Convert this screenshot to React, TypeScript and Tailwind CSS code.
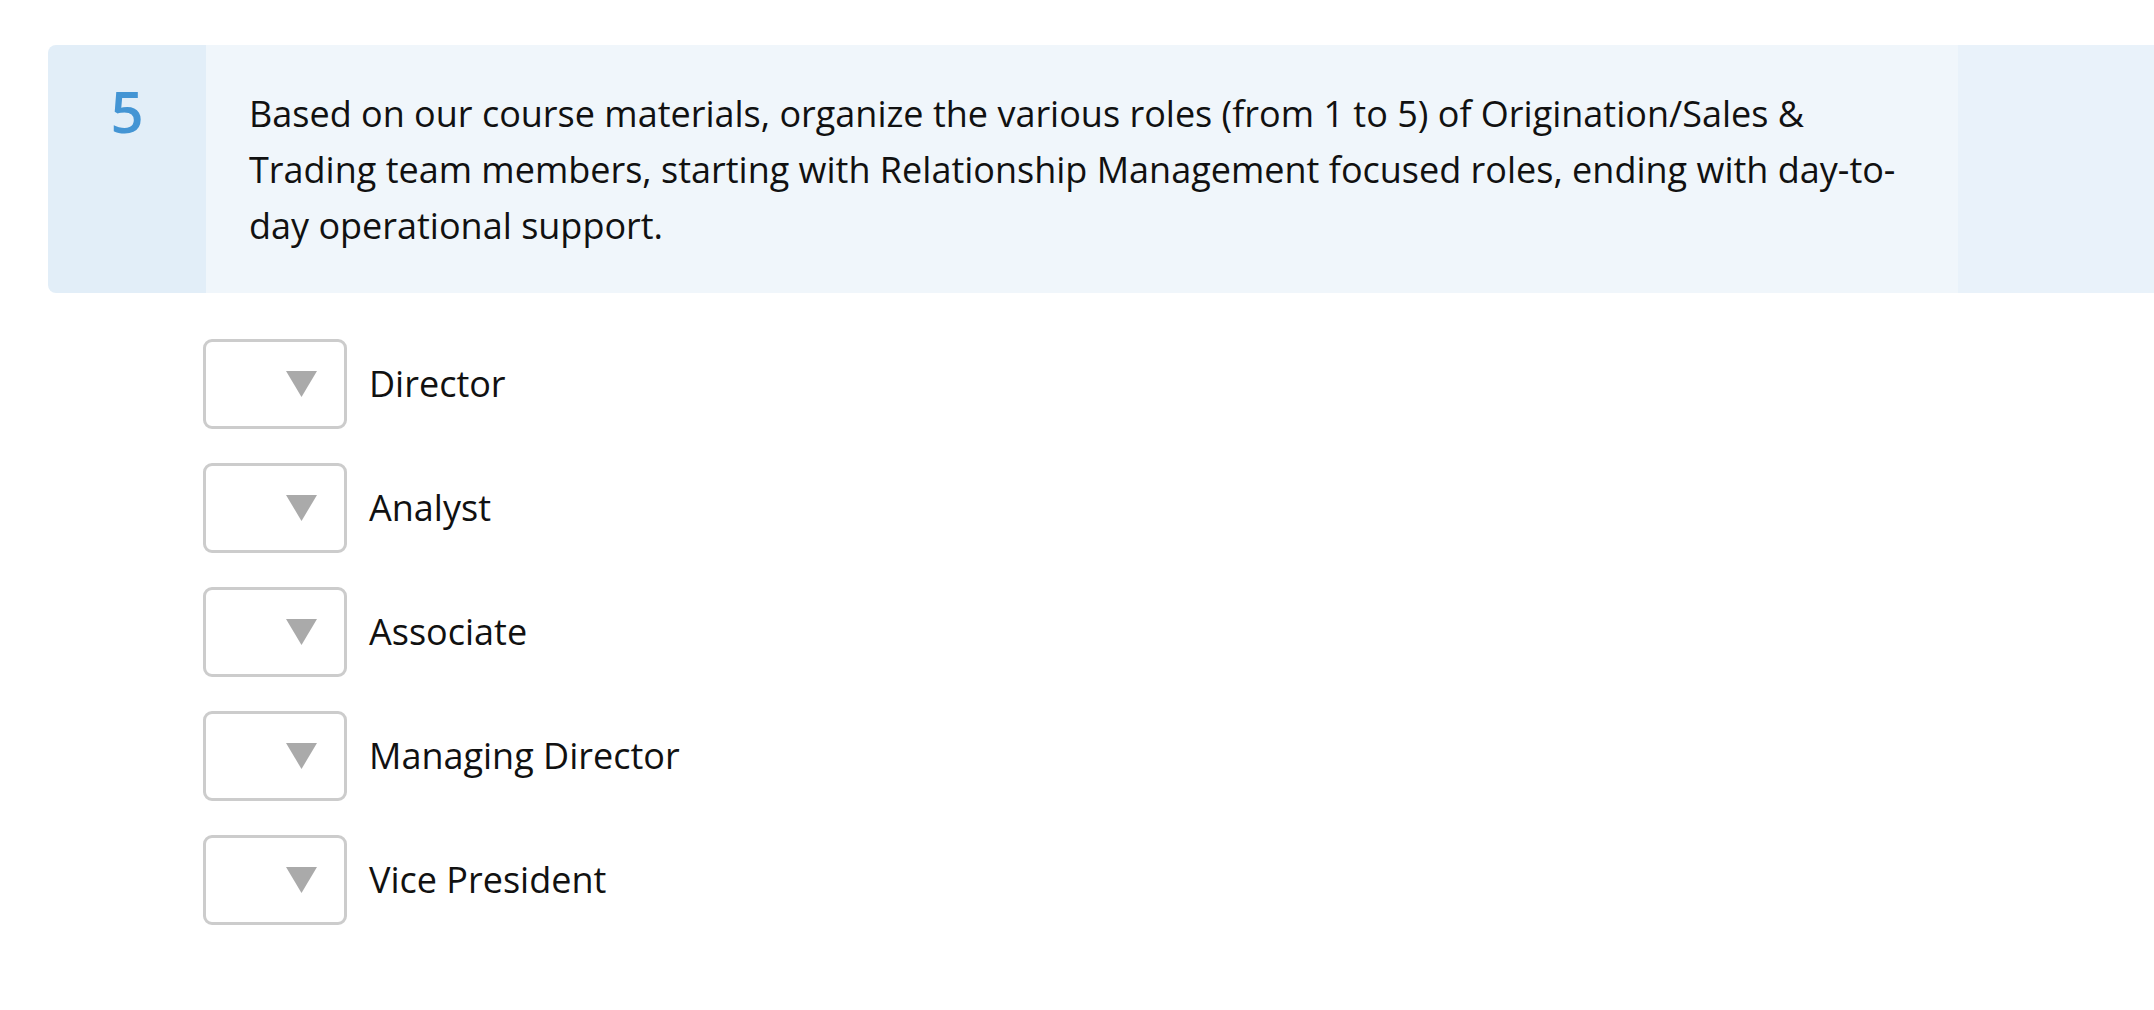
const roles = ["Director", "Analyst", "Associate", "Managing Director", "Vice President"];

function RankSelect() {
  return (
    <div className="relative flex h-[90px] w-[144px] shrink-0 items-center justify-end rounded-[9px] border-[3px] border-[#cccccc] bg-white pr-[27px]">
      <svg viewBox="0 0 31 26" className="h-[26px] w-[31px] fill-[#aaaaaa]">
        <polygon points="0 0 31 0 15.5 26" />
      </svg>
    </div>
  );
}

export default function App() {
  return (
    <div className="min-h-screen w-full overflow-x-hidden bg-white font-['Open_Sans',sans-serif] text-[#111111]">
      <div className="pl-[48px] pt-[45px]">
        {/* question header */}
        <div className="flex w-[2250px] overflow-hidden rounded-l-[8px]">
          <div className="flex w-[158px] shrink-0 justify-center bg-[#e2eef8] pt-[26px]">
            <div className="text-[58px] font-semibold leading-[80px] text-[#4495d4]">5</div>
          </div>
          <div className="w-[1752px] shrink-0 bg-[#f0f6fb] pb-[39px] pl-[43px] pr-[49px] pt-[41px] text-[36px] leading-[56px]">
            Based on our course materials, organize the various roles (from 1 to 5) of Origination/Sales &amp; Trading team members, starting with Relationship Management focused roles, ending with day-to-day operational support.
          </div>
          <div className="flex-1 bg-[#e9f2fa]" />
        </div>

        {/* answers */}
        <div className="mt-[46px] flex flex-col gap-[34px] pl-[155px]">
          {roles.map((role) => (
            <div key={role} className="flex items-center">
              <RankSelect />
              <div className="ml-[22px] text-[36px] leading-[48px]">{role}</div>
            </div>
          ))}
        </div>
      </div>
    </div>
  );
}
